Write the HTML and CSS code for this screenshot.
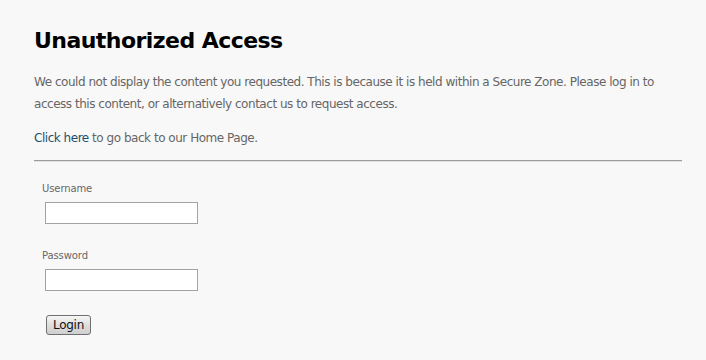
FILE: index.html
```html
<!DOCTYPE html>
<html lang="en">
<head>
<meta charset="utf-8">
<title>Unauthorized Access</title>
<link rel="stylesheet" href="styles.css">
</head>
<body>
<div class="page">
  <h1 class="title">Unauthorized Access</h1>
  <p class="text">We could not display the content you requested. This is because it is held within a Secure Zone. Please log in to access this content, or alternatively contact us to request access.</p>
  <p class="text back"><a class="link" href="#">Click here</a> to go back to our Home Page.</p>
  <hr class="rule">
  <form class="login">
    <div class="field">
      <label class="label" for="u">Username</label>
      <input class="input" id="u" type="text">
    </div>
    <div class="field">
      <label class="label" for="p">Password</label>
      <input class="input" id="p" type="password">
    </div>
    <div class="actions">
      <button class="btn" type="button">Login</button>
    </div>
  </form>
</div>
</body>
</html>
```
FILE: styles.css
```css
html, body {
  margin: 0;
  padding: 0;
  background: #f8f8f8;
}
.page {
  width: 648px;
  padding: 26px 0 0 34px;
  font-family: "DejaVu Sans", Verdana, sans-serif;
  color: #666666;
}
.title {
  margin: 0;
  font-size: 22px;
  line-height: 30px;
  font-weight: bold;
  color: #000000;
  letter-spacing: -0.55px;
}
.text {
  margin: 15px 0 0;
  font-size: 12px;
  line-height: 22px;
  letter-spacing: -0.47px;
}
.back {
  margin-top: 12px;
}
.link {
  color: #1f4f6e;
  text-decoration: none;
}
.rule {
  margin: 11px 0 0;
  height: 0;
  border: 0;
  border-top: 1px solid #9c9c9c;
  border-bottom: 1px solid #e2e2e2;
}
.login {
  display: flex;
  flex-direction: column;
  padding: 19px 0 0 8px;
}
.field {
  display: flex;
  flex-direction: column;
  align-items: flex-start;
  margin-bottom: 24px;
}
.field:last-of-type {
  margin-bottom: 23px;
}
.label {
  font-size: 10px;
  line-height: 16px;
  letter-spacing: -0.1px;
  color: #666666;
  margin-bottom: 5px;
}
.input {
  box-sizing: border-box;
  width: 153px;
  height: 22px;
  margin: 0 0 0 3px;
  padding: 1px 3px;
  border: 1px solid #a3a3a3;
  background: #ffffff;
  font-family: "DejaVu Sans", sans-serif;
  font-size: 12px;
}
.actions {
  display: flex;
  padding: 0 0 0 4px;
}
.btn {
  box-sizing: border-box;
  width: 45px;
  height: 20px;
  padding: 0;
  border: 1px solid #707070;
  border-radius: 3px;
  background: linear-gradient(#f6f6f6, #dedede 50%, #cfcfcf);
  font-family: "DejaVu Sans", sans-serif;
  font-size: 12px;
  letter-spacing: -0.3px;
  color: #111111;
  line-height: 18px;
}
```
